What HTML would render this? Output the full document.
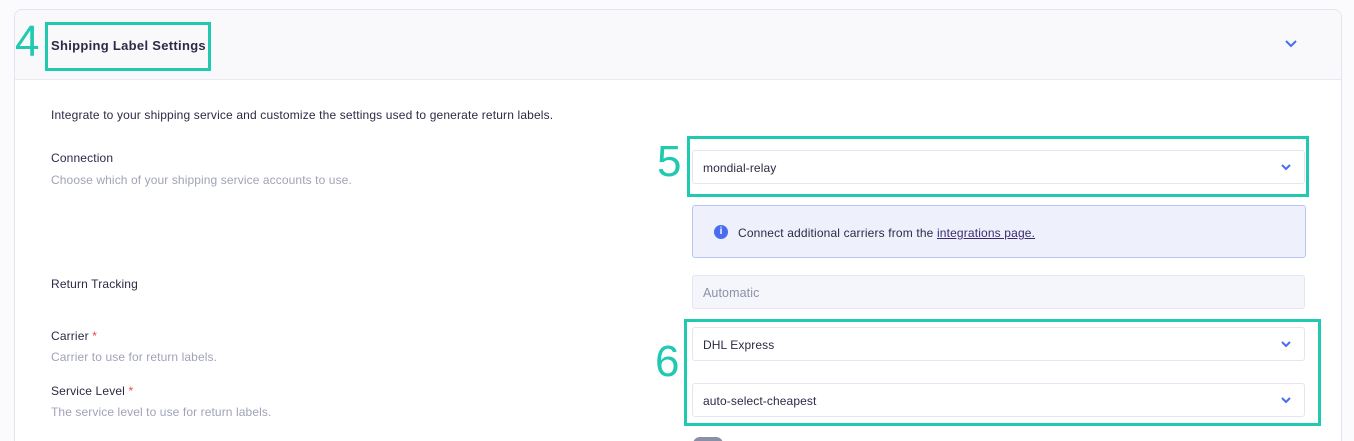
<!DOCTYPE html>
<html><head><style>
*{box-sizing:border-box;margin:0;padding:0}
html,body{width:1354px;height:441px;overflow:hidden}
body{background:#fbfbfd;font-family:"Liberation Sans",sans-serif;position:relative}
.card{position:absolute;left:14px;top:9px;width:1328px;height:450px;border:1px solid #e2e4ef;border-radius:8px;background:#fff;overflow:hidden}
.hdr{position:absolute;left:0;top:0;right:0;height:70px;background:#f9f9fb;border-bottom:1px solid #e6e8f2}
.a{position:absolute;white-space:nowrap}
.t{font-size:12px;letter-spacing:.15px;color:#2b2b45}
.d{font-size:12px;letter-spacing:.1px;color:#a0a3b8}
.g{position:absolute;border:3px solid #20c9b0}
.n{position:absolute;color:#20c9b0;font-size:44px;line-height:1}
.sel{position:absolute;left:692px;width:613px;height:34px;border:1px solid #e3e6f2;border-radius:3px;background:#fff;font-size:12px;letter-spacing:.1px;color:#2b2b45;padding:10px 0 0 10px}
.chev{position:absolute;right:12px;top:12px}
</style></head><body>
<div class="card"><div class="hdr"></div></div>
<div class="a" style="left:51px;top:38px;font-size:13px;letter-spacing:.3px;font-weight:bold;color:#2b2b45">Shipping Label Settings</div>
<svg class="a" style="left:1284px;top:39px" width="14" height="10" viewBox="0 0 14 10"><path d="M2 2l5 5 5-5" stroke="#4a6cf0" stroke-width="2" fill="none"/></svg>
<div class="g" style="left:45px;top:22px;width:166px;height:49px"></div>
<div class="n" style="left:15px;top:20px">4</div>
<div class="a t" style="left:51px;top:108px">Integrate to your shipping service and customize the settings used to generate return labels.</div>
<div class="a t" style="left:51px;top:151px">Connection</div>
<div class="a d" style="left:51px;top:173px">Choose which of your shipping service accounts to use.</div>
<div class="a t" style="left:51px;top:277px">Return Tracking</div>
<div class="a t" style="left:51px;top:329px">Carrier <span style="color:#e5484d">*</span></div>
<div class="a d" style="left:51px;top:350px">Carrier to use for return labels.</div>
<div class="a t" style="left:51px;top:384px">Service Level <span style="color:#e5484d">*</span></div>
<div class="a d" style="left:51px;top:405px">The service level to use for return labels.</div>

<div class="sel" style="top:150px">mondial-relay<svg class="chev" width="12" height="9" viewBox="0 0 12 9"><path d="M2 2l4 4 4-4" stroke="#4a6cf0" stroke-width="2" fill="none"/></svg></div>
<div class="g" style="left:687px;top:136px;width:622px;height:61px"></div>
<div class="n" style="left:657px;top:140px">5</div>
<div class="a" style="left:692px;top:205px;width:614px;height:53px;background:#eef1fc;border:1px solid #b9c6f2;border-radius:3px"></div>
<div class="a" style="left:714px;top:225px;width:14px;height:14px;border-radius:50%;background:#4a6cf0;color:#fff;font-size:10px;font-weight:bold;text-align:center;line-height:14px">i</div>
<div class="a t" style="left:738px;top:226px">Connect additional carriers from the <span style="text-decoration:underline;color:#3b2a70">integrations page.</span></div>
<div class="sel" style="top:275px;background:#f5f6fc;color:#8d90a6;font-size:12.5px">Automatic</div>
<div class="sel" style="top:327px">DHL Express<svg class="chev" width="12" height="9" viewBox="0 0 12 9"><path d="M2 2l4 4 4-4" stroke="#4a6cf0" stroke-width="2" fill="none"/></svg></div>
<div class="sel" style="top:383px">auto-select-cheapest<svg class="chev" width="12" height="9" viewBox="0 0 12 9"><path d="M2 2l4 4 4-4" stroke="#4a6cf0" stroke-width="2" fill="none"/></svg></div>
<div class="g" style="left:684px;top:319px;width:637px;height:107px"></div>
<div class="n" style="left:655px;top:340px">6</div>
<div class="a" style="left:693px;top:437px;width:30px;height:14px;border-radius:7px;background:#8a8fa8"></div>
</body></html>
